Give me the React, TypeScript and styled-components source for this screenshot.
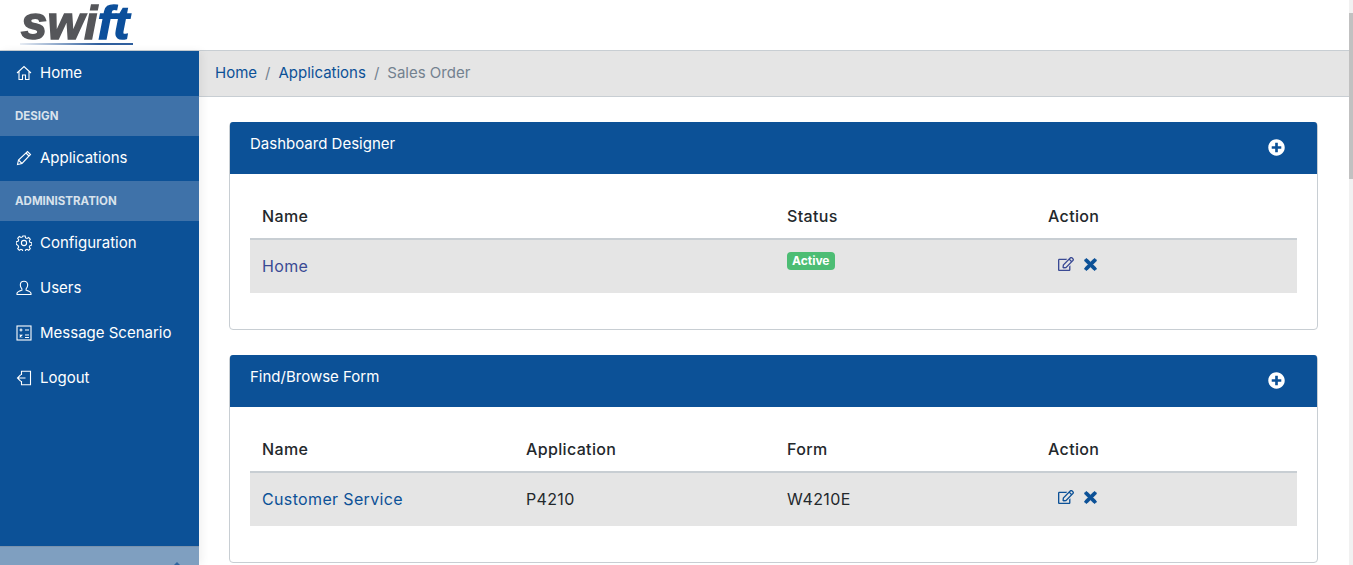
import React from "react";
import styled, { createGlobalStyle } from "styled-components";
import { FaPlusCircle, FaRegEdit, FaTimes } from "react-icons/fa";

const Global = createGlobalStyle`
  html, body {
    margin: 0;
    height: 565px;
    overflow: hidden;
    background: #fff;
  }
  body {
    font-family: Inter, "Open Sans", "Liberation Sans", sans-serif;
    font-size: 15px;
    color: #23282c;
  }
  * { box-sizing: border-box; }
`;

const Page = styled.div`
  display: flex;
  height: 565px;
  overflow: hidden;
`;

const Shell = styled.div`
  flex: 1;
  min-width: 0;
  display: flex;
  flex-direction: column;
`;

const Scrollbar = styled.div`
  width: 4px;
  background: #f1f1f1;
  padding-top: 13px;
`;

const ScrollThumb = styled.div`
  height: 166px;
  background: #c1c1c1;
`;

const Header = styled.header`
  height: 51px;
  flex: none;
  padding-left: 20px;
  border-bottom: 1px solid #c8ced3;
  background: #fff;
`;

const Logo = styled.div`
  display: inline-block;
  height: 47px;
  padding: 0 3px 0 1px;
  font-family: "Liberation Sans", Arial, sans-serif;
  font-style: italic;
  font-weight: 700;
  font-size: 47px;
  line-height: 46px;
  letter-spacing: 0.3px;
  color: #55565a;
  -webkit-text-stroke: 1.6px currentColor;
  background: linear-gradient(90deg, #e8edf4, #2f5f9e 70%) 0 43px / 100% 2px no-repeat;
  filter: blur(0.3px);
`;

const LogoAccent = styled.span`
  color: #0c4f9b;
`;

const Body = styled.div`
  flex: 1;
  min-height: 0;
  display: flex;
`;

const Sidebar = styled.nav`
  width: 199px;
  flex: none;
  background: #0c5197;
  display: flex;
  flex-direction: column;
  color: #fff;
  box-shadow: 3px 0 8px rgba(0, 0, 0, 0.06);
  z-index: 1;
`;

const NavItem = styled.a`
  height: 45px;
  display: flex;
  align-items: center;
  gap: 8px;
  padding: 0 0 2px 16px;
  color: #fff;
  font-size: 15px;
  svg {
    width: 16px;
    height: 16px;
    flex: none;
    fill: none;
    stroke: #fff;
    stroke-width: 1.1;
  }
`;

const NavTitle = styled.div`
  height: 40px;
  display: flex;
  align-items: center;
  padding-left: 15px;
  background: #3f72a9;
  color: #d8e2ec;
  font-size: 11.5px;
  font-weight: 700;
`;

const SidebarFooter = styled.div`
  margin-top: auto;
  height: 19px;
  padding-right: 19px;
  display: flex;
  justify-content: flex-end;
  align-items: flex-end;
  background: #7f9fc0;
  border-top: 1px solid #7a92ad;
`;

const FooterCaret = styled.span`
  width: 0;
  height: 0;
  border-left: 3px solid transparent;
  border-right: 3px solid transparent;
  border-bottom: 3px solid #2f659e;
`;

const Main = styled.main`
  flex: 1;
  min-width: 0;
  display: flex;
  flex-direction: column;
`;

const Breadcrumb = styled.ol`
  margin: 0;
  height: 46px;
  flex: none;
  padding: 0 0 2px 16px;
  list-style: none;
  display: flex;
  align-items: center;
  background: #e5e5e5;
  border-bottom: 1px solid #c8ced3;
  font-size: 15px;
`;

const Crumb = styled.li<{ $current?: boolean }>`
  color: ${(p) => (p.$current ? "#73818f" : "#0c5197")};
  &:not(:first-child)::before {
    content: "/";
    color: #73818f;
    padding: 0 8px;
  }
`;

const Content = styled.div`
  padding: 25px 31px 0 30px;
  display: flex;
  flex-direction: column;
  gap: 25px;
`;

const Card = styled.section`
  height: 208px;
  flex: none;
  border: 1px solid #c8ced3;
  border-radius: 4px;
  background: #fff;
`;

const CardHeader = styled.div`
  height: 52px;
  margin-top: -1px;
  padding: 12px 32px 0 20px;
  display: flex;
  justify-content: space-between;
  border-radius: 3px 3px 0 0;
  background: #0c5197;
  color: #fff;
  font-size: 15px;
`;

const AddButton = styled.span`
  display: flex;
  margin-top: 5px;
  font-size: 17px;
  color: #fff;
`;

const Table = styled.div`
  margin: 22px 20px 0;
`;

const Row = styled.div<{ $head?: boolean }>`
  display: grid;
  grid-template-columns: 264px 261px 261px 1fr;
  height: ${(p) => (p.$head ? "44px" : "53px")};
  background: ${(p) => (p.$head ? "transparent" : "#e5e5e5")};
  border-bottom: ${(p) => (p.$head ? "2px solid #c8ced3" : "none")};
`;

const Cell = styled.div<{ $head?: boolean; $span?: number; $link?: string }>`
  grid-column: span ${(p) => p.$span ?? 1};
  padding: ${(p) => (p.$head ? "11px 12px 0" : "17px 12px 0")};
  font-size: 16px;
  letter-spacing: 0.35px;
  line-height: 19px;
  font-weight: ${(p) => (p.$head ? 500 : 400)};
  color: ${(p) => p.$link ?? "#23282c"};
`;

const StatusCell = styled(Cell)`
  padding-top: 12px;
  line-height: 0;
`;

const Badge = styled.span`
  display: inline-block;
  background: #4dbd74;
  color: #fff;
  font-size: 12px;
  font-weight: 700;
  letter-spacing: 0;
  line-height: 14px;
  padding: 2px 5px;
  border-radius: 4px;
`;

const Actions = styled(Cell)`
  display: flex;
  gap: 8px;
  padding: 16px 0 0 22px;
`;

const EditLink = styled.span<{ $color: string }>`
  display: flex;
  align-items: center;
  height: 16px;
  font-size: 16px;
  color: ${(p) => p.$color};
`;

const RemoveLink = styled.span`
  display: flex;
  align-items: center;
  height: 16px;
  font-size: 17px;
  color: #0c5197;
  svg {
    stroke: currentColor;
    stroke-width: 30;
  }
`;

const HomeIcon = () => (
  <svg viewBox="0 0 16 16">
    <path d="M1 8 8 1.500 15 8M3 6.500V14.500H6.500V10H9.500V14.500H13V6.500" />
  </svg>
);
const PencilIcon = () => (
  <svg viewBox="0 0 16 16">
    <path d="M1.500 14.500 2.500 10 11.500 1.500 14.500 4.500 6 13.500ZM2.500 10 6 13.500M10 3 13 6" />
  </svg>
);
const GearIcon = () => (
  <svg viewBox="0 0 16 16">
    <circle cx="8" cy="8" r="2.600" />
    <path d="M6.800 1h2.400l.4 1.900 1.400.6 1.700-1 1.600 1.700-1 1.600.6 1.400 1.900.5v2.400l-1.900.5-.6 1.400 1 1.600-1.600 1.700-1.700-1-1.400.6-.4 1.900H6.800l-.4-1.900-1.400-.6-1.700 1-1.600-1.700 1-1.600-.6-1.400L.2 9.100V6.700l1.900-.5.6-1.400-1-1.600 1.600-1.700 1.700 1 1.400-.6Z" />
  </svg>
);
const UserIcon = () => (
  <svg viewBox="0 0 16 16">
    <path d="M8 1.200c-2.400 0-3.700 1.800-3.700 3.900 0 1.700.8 3 1.600 3.800v1.300c-2 .7-4.600 1.500-4.900 3.200v1.100h14v-1.100c-.3-1.700-2.900-2.500-4.900-3.200V8.900c.8-.8 1.600-2.100 1.600-3.800 0-2.100-1.300-3.900-3.700-3.900Z" />
  </svg>
);
const ScenarioIcon = () => (
  <svg viewBox="0 0 16 16">
    <rect x="1" y="1" width="14" height="14" />
    <path d="M3.500 5h3M5 3.500v3M9 5h4M3.700 9.700l2.600 2.600M6.300 9.700l-2.600 2.600M9 10h4M9 12.500h4" />
  </svg>
);
const LogoutIcon = () => (
  <svg viewBox="0 0 16 16">
    <path d="M5.500 5V1.200H14.500V14.800H5.500V11M9.500 8H1.500M4.800 4.700 1.500 8l3.300 3.300" />
  </svg>
);

const RowActions = ({ editColor }: { editColor: string }) => (
  <Actions>
    <EditLink $color={editColor}>
      <FaRegEdit />
    </EditLink>
    <RemoveLink>
      <FaTimes />
    </RemoveLink>
  </Actions>
);

const App = () => (
  <Page>
    <Global />
    <Shell>
      <Header>
        <Logo>
          swi<LogoAccent>ft</LogoAccent>
        </Logo>
      </Header>
      <Body>
        <Sidebar>
          <NavItem><HomeIcon />Home</NavItem>
          <NavTitle>DESIGN</NavTitle>
          <NavItem><PencilIcon />Applications</NavItem>
          <NavTitle>ADMINISTRATION</NavTitle>
          <NavItem><GearIcon />Configuration</NavItem>
          <NavItem><UserIcon />Users</NavItem>
          <NavItem><ScenarioIcon />Message Scenario</NavItem>
          <NavItem><LogoutIcon />Logout</NavItem>
          <SidebarFooter>
            <FooterCaret />
          </SidebarFooter>
        </Sidebar>
        <Main>
          <Breadcrumb>
            <Crumb>Home</Crumb>
            <Crumb>Applications</Crumb>
            <Crumb $current>Sales Order</Crumb>
          </Breadcrumb>
          <Content>
            <Card>
              <CardHeader>
                Dashboard Designer
                <AddButton><FaPlusCircle /></AddButton>
              </CardHeader>
              <Table>
                <Row $head>
                  <Cell $head $span={2}>Name</Cell>
                  <Cell $head>Status</Cell>
                  <Cell $head>Action</Cell>
                </Row>
                <Row>
                  <Cell $span={2} $link="#3a4a94">Home</Cell>
                  <StatusCell><Badge>Active</Badge></StatusCell>
                  <RowActions editColor="#3a4a94" />
                </Row>
              </Table>
            </Card>
            <Card>
              <CardHeader>
                Find/Browse Form
                <AddButton><FaPlusCircle /></AddButton>
              </CardHeader>
              <Table>
                <Row $head>
                  <Cell $head>Name</Cell>
                  <Cell $head>Application</Cell>
                  <Cell $head>Form</Cell>
                  <Cell $head>Action</Cell>
                </Row>
                <Row>
                  <Cell $link="#0c5197">Customer Service</Cell>
                  <Cell>P4210</Cell>
                  <Cell>W4210E</Cell>
                  <RowActions editColor="#0c5197" />
                </Row>
              </Table>
            </Card>
          </Content>
        </Main>
      </Body>
    </Shell>
    <Scrollbar>
      <ScrollThumb />
    </Scrollbar>
  </Page>
);

export default App;
